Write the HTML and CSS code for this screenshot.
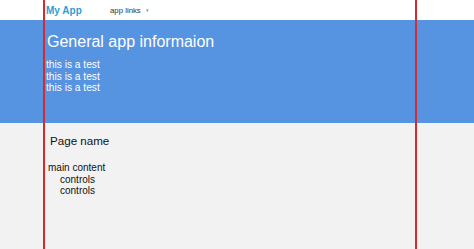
FILE: index.html
```html
<!DOCTYPE html>
<html lang="en">
<head>
<meta charset="utf-8">
<title>My App</title>
<link rel="stylesheet" href="styles.css">
</head>
<body>
<div class="page">
  <header class="topbar">
    <span class="brand">My App</span>
    <span class="links">app links <span class="caret">&#9662;</span></span>
  </header>
  <section class="hero">
    <h1 class="hero-title">General app informaion</h1>
    <p class="hero-text">this is a test<br>this is a test<br>this is a test</p>
  </section>
  <main class="content">
    <h2 class="page-name">Page name</h2>
    <p class="main-text">main content</p>
    <div class="controls">
      <div>controls</div>
      <div>controls</div>
    </div>
  </main>
  <div class="guides"></div>
</div>
</body>
</html>
```

FILE: styles.css
```css
html, body {
  margin: 0;
  padding: 0;
  height: 100%;
}
body {
  font-family: "Liberation Sans", Arial, sans-serif;
  background: #ffffff;
}
.page {
  position: relative;
  display: flex;
  flex-direction: column;
  min-height: 100vh;
}
.topbar {
  height: 20px;
  display: flex;
  align-items: center;
  padding-left: 46px;
  background: #ffffff;
}
.brand {
  font-size: 10px;
  font-weight: bold;
  color: #2a9fd6;
  width: 64px;
}
.links {
  font-size: 7.8px;
  color: #333333;
}
.caret {
  font-size: 5px;
  color: #2a9fd6;
  margin-left: 3px;
  vertical-align: middle;
}
.hero {
  height: 103px;
  box-sizing: border-box;
  background: #5694e2;
  color: #ffffff;
  padding: 13px 0 0 46px;
}
.hero-title {
  margin: 0 0 0 1px;
  font-size: 16px;
  line-height: 18px;
  font-weight: normal;
}
.hero-text {
  margin: 8px 0 0;
  font-size: 10.2px;
  line-height: 11.6px;
}
.content {
  flex: 1;
  background: #f2f2f2;
  color: #111111;
  padding: 11px 0 0 48px;
}
.page-name {
  margin: 0 0 0 2px;
  font-size: 11.6px;
  line-height: 13px;
  font-weight: normal;
}
.main-text {
  margin: 15px 0 0;
  font-size: 10px;
  line-height: 11.5px;
}
.controls {
  padding-left: 12px;
  font-size: 10px;
  line-height: 11.3px;
}
.guides {
  position: absolute;
  top: 0;
  bottom: 0;
  left: 43px;
  width: 370px;
  border-left: 2px solid #d42a30;
  border-right: 2px solid #d42a30;
  pointer-events: none;
}
```
